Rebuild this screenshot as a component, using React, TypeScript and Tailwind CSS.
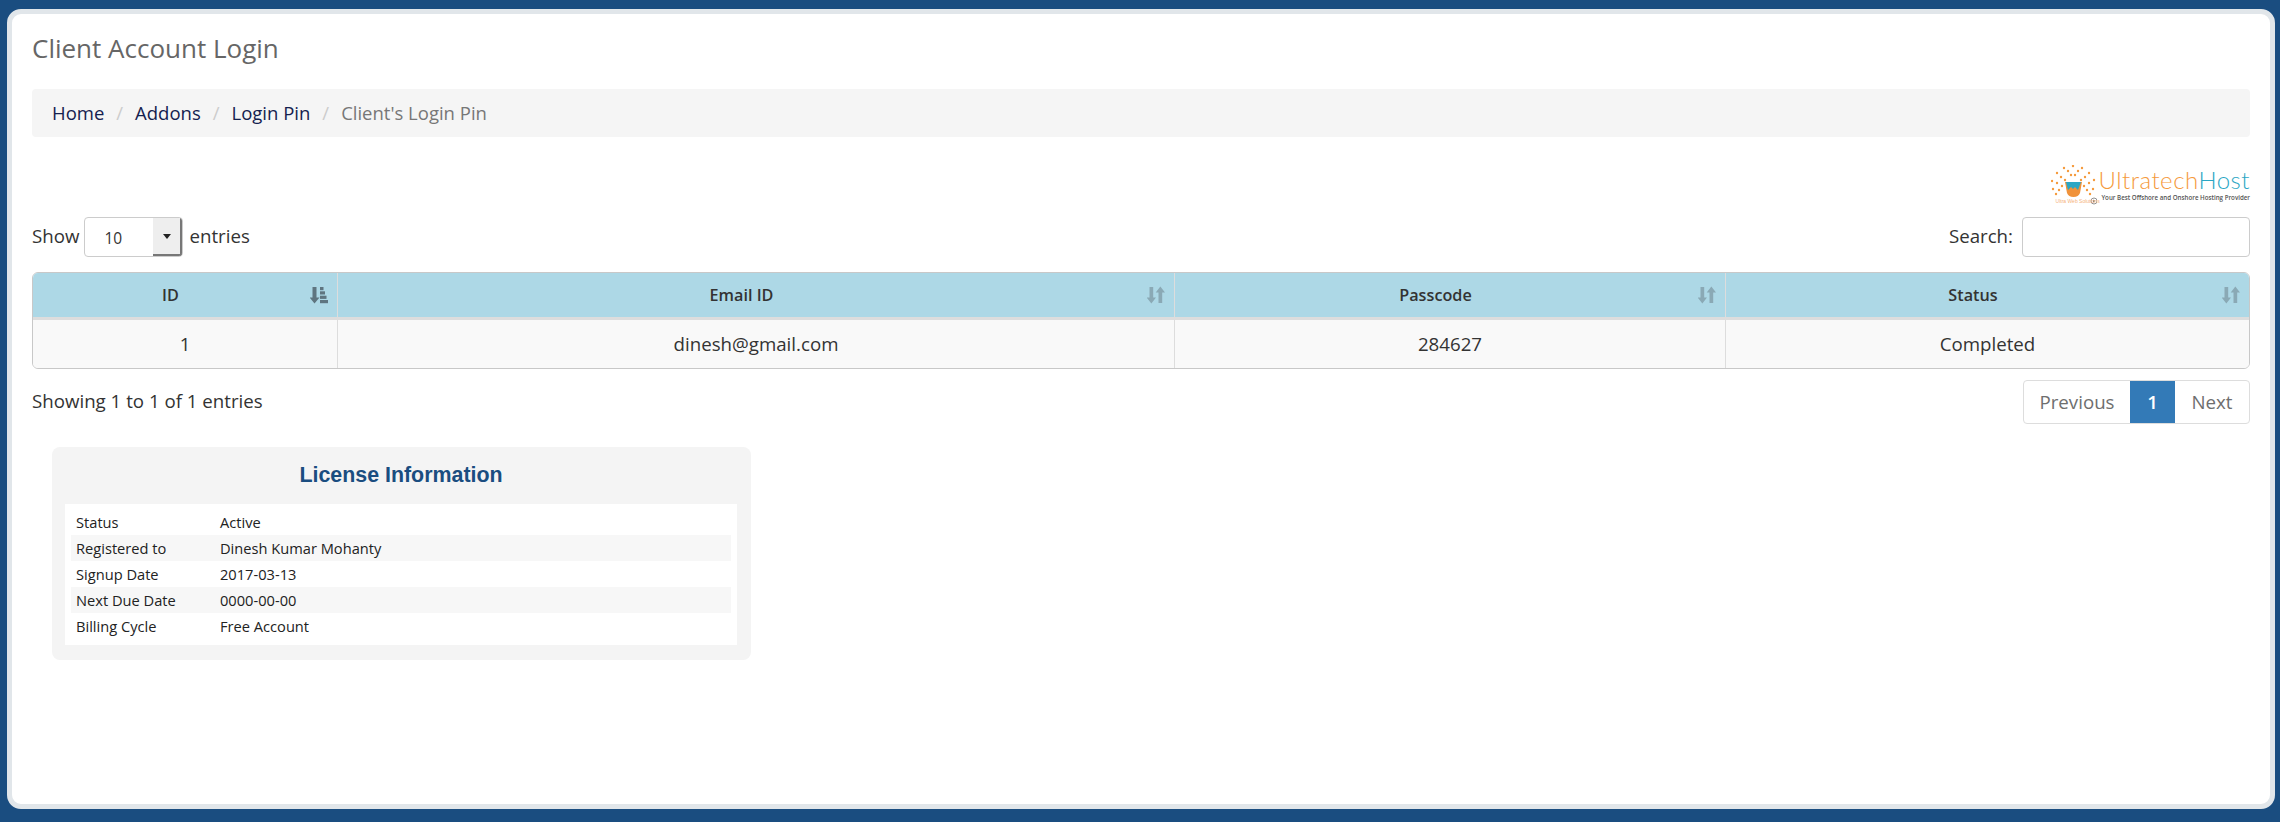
const crumbs = ['Home', 'Addons', 'Login Pin'];

const license = [
  ['Status', 'Active'],
  ['Registered to', 'Dinesh Kumar Mohanty'],
  ['Signup Date', '2017-03-13'],
  ['Next Due Date', '0000-00-00'],
  ['Billing Cycle', 'Free Account'],
];

const columns = [
  { label: 'ID', value: '1', sorted: true },
  { label: 'Email ID', value: 'dinesh@gmail.com', sorted: false },
  { label: 'Passcode', value: '284627', sorted: false },
  { label: 'Status', value: 'Completed', sorted: false },
];

const SortIcon = ({ sorted }: { sorted: boolean }) =>
  sorted ? (
    <svg width="18" height="18" viewBox="0 0 18 18" className="fill-[#5f7580]">
      <path d="M2.500 1h4v10.500H9.500l-5 6-5-6h3z" />
      <rect x="10" y="1" width="3.500" height="3.200" />
      <rect x="10" y="5.300" width="5" height="3.200" />
      <rect x="10" y="9.700" width="6.500" height="3.200" />
      <rect x="10" y="14" width="8" height="3.200" />
    </svg>
  ) : (
    <svg width="18" height="18" viewBox="0 0 18 18" className="fill-[#8aa9b5]">
      <path d="M2.500 1h3.700v10.500h2.800L4.350 17.500-0.300 11.500h2.800z" />
      <path d="M11.500 17h3.700V6.500h2.800l-4.650-6-4.650 6h2.800z" />
    </svg>
  );

const LogoMark = () => {
  const dots = [
    [22, 1], [13, 3], [31, 3], [6, 8], [38, 8], [1, 16], [43, 15], [2, 24], [42, 24],
    [17, 6], [27, 6], [10, 12], [34, 12], [6, 18], [38, 18], [8, 25], [36, 25],
    [20, 10], [24, 10], [14, 15], [30, 15], [11, 21], [33, 21], [5, 29], [39, 29],
  ];
  return (
    <svg width="46" height="40" viewBox="0 0 46 40">
      {dots.map(([x, y], i) => (
        <circle key={i} cx={x} cy={y} r="1.200" fill="#f59a3c" />
      ))}
      <path d="M14 17h17l-2 11q-1.500 4-6.500 4T16 28z" fill="#f0923a" />
      <path d="M15 17h15l-3 8-3-3-2 2-2-2-3 3z" fill="#2ba6c4" />
      <circle cx="43" cy="36" r="3" fill="none" stroke="#777" strokeWidth="0.800" />
      <path d="M42 34.500l2.500 1.500-2.500 1.500z" fill="#777" />
    </svg>
  );
};

const App = () => {
  return (
    <div className="h-[822px] bg-[#1a4d80] pt-[9px] pl-[7px] pr-[5px] font-['Open_Sans',sans-serif] text-[18.700px] leading-[26px] text-[#333]">
      <div className="h-[800px] rounded-[14px] border-[5px] border-[#e1e6ea] bg-white px-5 pt-[17px]">
        <h1 className="h-[35px] text-[26px] leading-[35px] text-[#666]">Client Account Login</h1>

        {/* Breadcrumb */}
        <div className="mt-[23px] flex h-12 items-center rounded bg-[#f5f5f5] px-5 text-[18.500px]">
          {crumbs.map((crumb) => (
            <span key={crumb} className="flex">
              <span className="text-[#14214f]">{crumb}</span>
              <span className="px-[12px] text-[#ccc]">/</span>
            </span>
          ))}
          <span className="text-[#777]">Client's Login Pin</span>
        </div>

        {/* Logo */}
        <div className="mt-7 flex h-[40px] justify-end">
          <div className="flex items-start gap-[2px]">
            <div className="relative">
              <LogoMark />
              <span className="absolute left-[5px] top-[33px] whitespace-nowrap font-['Liberation_Sans',sans-serif] text-[5px] leading-[7px] text-[#f5b27a]">
                Ultra Web Solutions
              </span>
            </div>
            <div className="flex flex-col items-end pt-[2px]">
              <div className="font-['Lato',sans-serif] text-[24px] font-light leading-[26px] tracking-[0.5px]">
                <span className="text-[#f59a3c]">Ultratech</span>
                <span className="text-[#2ba6c4]">Host</span>
              </div>
              <div className="whitespace-nowrap text-[6.200px] font-semibold leading-[9px] text-[#555]">
                Your Best Offshore and Onshore Hosting Provider
              </div>
            </div>
          </div>
        </div>

        {/* Table controls */}
        <div className="mt-3 flex h-10 items-center justify-between">
          <div className="flex items-center">
            <span className="-mt-[2px]">Show</span>
            <div className="ml-[5px] flex h-10 w-[99px] overflow-hidden rounded border border-[#ccc]">
              <span className="flex-1 pl-[19px] pt-[9px] text-[15.500px] leading-[22px]">10</span>
              <span className="flex w-[29px] items-center justify-center border-b-2 border-r-2 border-[#777] bg-[#eee]">
                <span className="border-x-[4px] border-t-[5px] border-x-transparent border-t-[#222]" />
              </span>
            </div>
            <span className="-mt-[2px] ml-[6px]">entries</span>
          </div>
          <div className="flex items-center">
            <span className="-mt-[2px]">Search:</span>
            <input className="ml-[9px] h-10 w-[228px] rounded border border-[#ccc] bg-white" />
          </div>
        </div>

        {/* Table */}
        <div className="mt-[15px] grid h-[97px] grid-cols-[305px_837px_551px_1fr] grid-rows-[44px_1fr] overflow-hidden rounded-md border border-[#c8c8c8]">
          {columns.map((col, i) => (
            <div
              key={col.label}
              className={`relative flex items-center justify-center bg-[#add8e6] pr-[29px] text-[16.200px] font-semibold ${
                i < 3 ? 'border-r border-[#ddd]' : ''
              }`}
            >
              {col.label}
              <span className="absolute right-[9px] top-[13px]">
                <SortIcon sorted={col.sorted} />
              </span>
            </div>
          ))}
          {columns.map((col, i) => (
            <div
              key={col.label}
              className={`flex items-center justify-center border-t-[3px] border-[#ddd] bg-[#f9f9f9] ${
                i < 3 ? 'border-r' : ''
              }`}
            >
              {col.value}
            </div>
          ))}
        </div>

        {/* Footer */}
        <div className="mt-[11px] flex items-start justify-between">
          <span className="mt-2">Showing 1 to 1 of 1 entries</span>
          <div className="flex h-11 rounded border border-[#ddd] text-[#6e6e6e]">
            <span className="flex w-[106px] items-center justify-center">Previous</span>
            <span className="flex w-[45px] items-center justify-center bg-[#337ab7] font-semibold text-white">1</span>
            <span className="flex w-[74px] items-center justify-center">Next</span>
          </div>
        </div>

        {/* License box */}
        <div className="ml-5 mt-[23px] h-[213px] w-[699px] rounded-lg bg-[#f4f4f4] pl-[13px] pr-[14px] pt-[14px]">
          <h2 className="text-center font-['Liberation_Sans',sans-serif] text-[21.400px] font-bold leading-[28px] text-[#1a4d80]">
            License Information
          </h2>
          <div className="mt-[15px] bg-white px-[6px] pb-[6px] pt-[5px] text-[14.650px] leading-[26px] text-[#222]">
            {license.map(([label, value], i) => (
              <div key={label} className={`flex h-[26px] ${i % 2 === 1 ? 'bg-[#f7f7f7]' : ''}`}>
                <span className="w-[149px] pl-[5px]">{label}</span>
                <span>{value}</span>
              </div>
            ))}
          </div>
        </div>
      </div>
    </div>
  );
};

export default App;
